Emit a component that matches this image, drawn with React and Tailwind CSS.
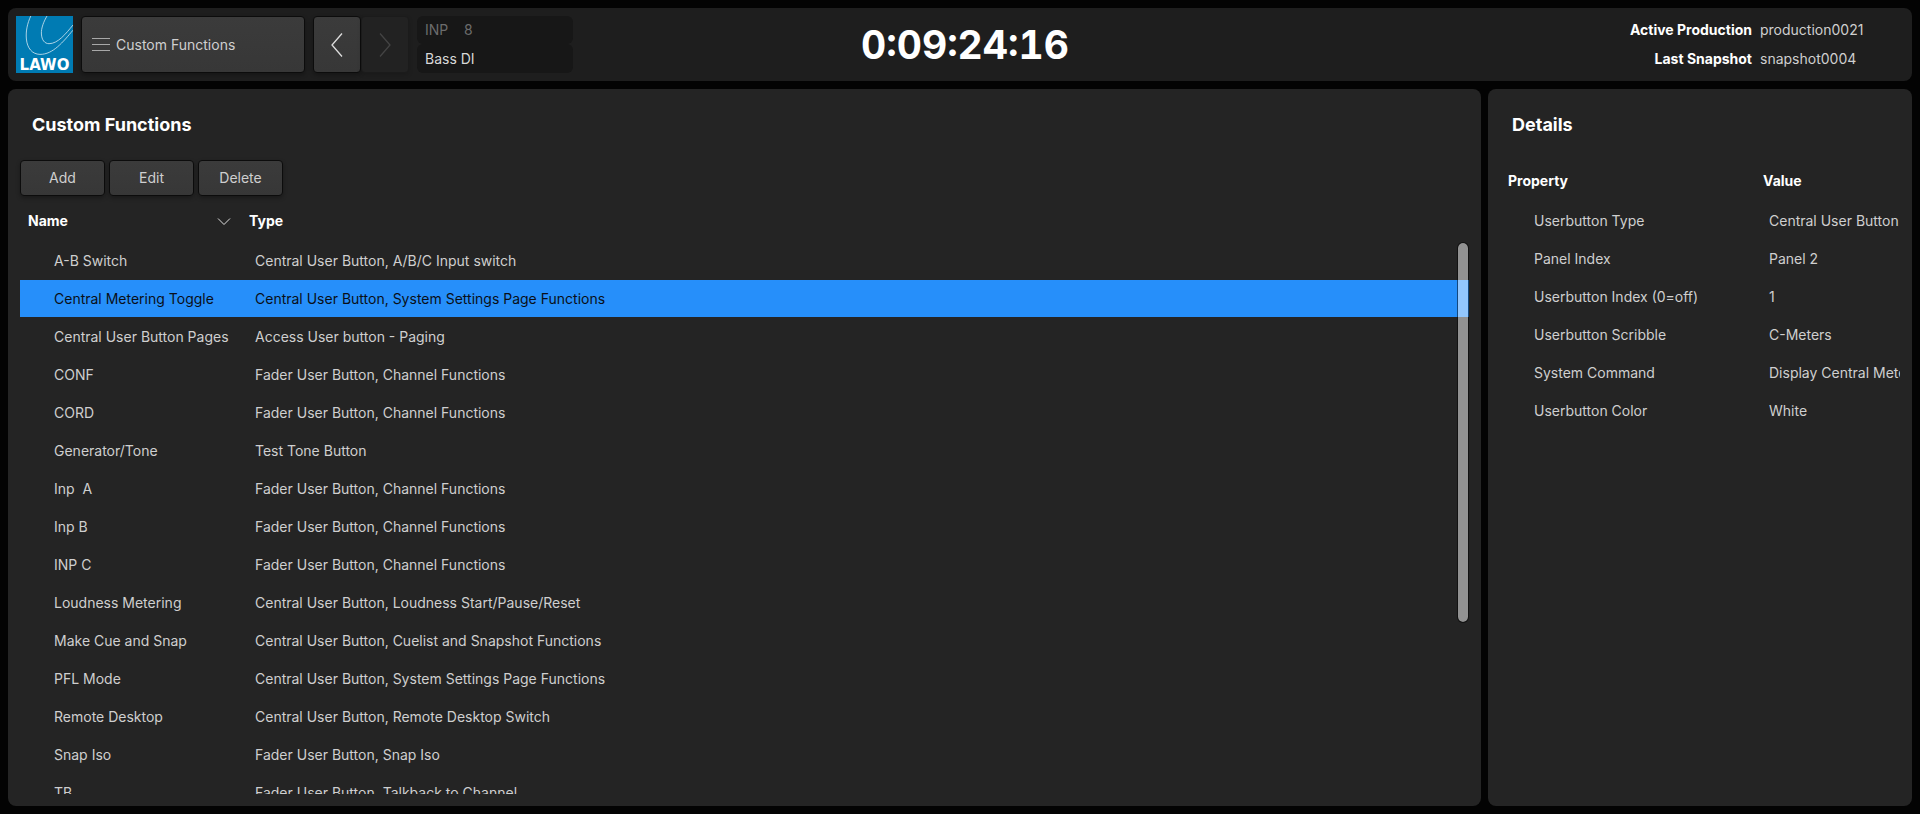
import React from "react";

const functions = [
  ["A-B Switch", "Central User Button, A/B/C Input switch"],
  ["Central Metering Toggle", "Central User Button, System Settings Page Functions"],
  ["Central User Button Pages", "Access User button - Paging"],
  ["CONF", "Fader User Button, Channel Functions"],
  ["CORD", "Fader User Button, Channel Functions"],
  ["Generator/Tone", "Test Tone Button"],
  ["Inp  A", "Fader User Button, Channel Functions"],
  ["Inp B", "Fader User Button, Channel Functions"],
  ["INP C", "Fader User Button, Channel Functions"],
  ["Loudness Metering", "Central User Button, Loudness Start/Pause/Reset"],
  ["Make Cue and Snap", "Central User Button, Cuelist and Snapshot Functions"],
  ["PFL Mode", "Central User Button, System Settings Page Functions"],
  ["Remote Desktop", "Central User Button, Remote Desktop Switch"],
  ["Snap Iso", "Fader User Button, Snap Iso"],
  ["TB", "Fader User Button, Talkback to Channel"],
];

const details = [
  ["Userbutton Type", "Central User Button"],
  ["Panel Index", "Panel 2"],
  ["Userbutton Index (0=off)", "1"],
  ["Userbutton Scribble", "C-Meters"],
  ["System Command", "Display Central Metering"],
  ["Userbutton Color", "White"],
];

const raised =
  "rounded border border-[#0c0c0c] bg-linear-to-b from-[#3b3b3b] to-[#373737] text-[#cfcfcf] shadow-[0_2px_4px_rgba(0,0,0,0.3)]";

function Logo() {
  return (
    <svg viewBox="0 0 57 57" className="size-[57px] shrink-0" role="img" aria-label="Lawo">
      <rect width="57" height="57" fill="#007bb3" />
      <g fill="none" stroke="#d5e9f3" strokeWidth="0.8">
        <path d="M14.8 0C11.5 7 9.600 15 10.400 23C11.200 32 16 38.200 24 38.400C37 38.500 47 26 57 14.200" />
        <path d="M31 0C28 5 25 12 25.400 18C25.800 24 28.500 27.600 33 27.700C42 27.700 50 17.500 57 9" />
      </g>
      <text
        x="28.500"
        y="53.500"
        textAnchor="middle"
        fontFamily="DejaVu Sans, sans-serif"
        fontWeight="700"
        fontSize="15"
        fill="#fff"
      >
        LAWO
      </text>
    </svg>
  );
}

function Chevron({ d, className, box }) {
  return (
    <svg viewBox={box} className={className} fill="none" stroke="currentColor" aria-hidden="true">
      <path d={d} />
    </svg>
  );
}

function Header() {
  return (
    <header className="grid grid-cols-[1fr_auto_1fr] items-center rounded-lg bg-[#1e1e1e] p-2">
      <div className="flex items-center">
        <Logo />
        <button className={`ml-2 flex h-[57px] w-56 items-center gap-1.5 px-2.5 ${raised}`}>
          <svg viewBox="0 0 18 13" className="h-[13px] w-[18px]" stroke="#a8a8a8" aria-hidden="true">
            <path d="M0 0.500H18M0 6.500H18M0 12.500H18" />
          </svg>
          Custom Functions
        </button>
        <button aria-label="Back" className={`ml-2 flex h-[57px] w-12 items-center justify-center ${raised}`}>
          <Chevron box="0 0 12 24" d="M11 0.500L1 12L11 23.500" className="h-6 w-3 stroke-[1.300] text-[#dedede]" />
        </button>
        <button
          aria-label="Forward"
          disabled
          className="flex h-[57px] w-12 items-center justify-center rounded border border-[#1b1b1b] bg-[#222222] shadow-[0_2px_4px_rgba(0,0,0,0.15)]"
        >
          <Chevron box="0 0 12 24" d="M1 0.500L11 12L1 23.500" className="h-6 w-3 stroke-[1.300] text-[#444444]" />
        </button>
        <div className="ml-2 w-[156px] whitespace-pre">
          <div className="flex h-7 items-center rounded-md bg-[#171717] px-2 text-[#6c6c6c]">{"INP    8"}</div>
          <div className="flex h-[29px] items-center rounded-md bg-[#171717] px-2 text-[#d8d8d8]">Bass DI</div>
        </div>
      </div>
      <time className="pl-2.5 text-[39px] leading-none font-bold text-white tabular-nums">0:09:24:16</time>
      <dl className="grid grid-cols-[1fr_144px] gap-x-2 gap-y-px leading-7">
        <dt className="text-right font-bold text-white">Active Production</dt>
        <dd>production0021</dd>
        <dt className="text-right font-bold text-white">Last Snapshot</dt>
        <dd>snapshot0004</dd>
      </dl>
    </header>
  );
}

function FunctionTable() {
  return (
    <div className="relative min-h-0 flex-1 overflow-hidden">
      <table className="w-full table-fixed border-separate border-spacing-0 text-left whitespace-pre">
        <thead>
          <tr className="h-[42px] text-white">
            <th className="w-[221px] pr-1.5 pl-2">
              <div className="flex items-center justify-between">
                Name
                <Chevron box="0 0 14 7" d="M1 0.500L7 6.500L13 0.500" className="mr-1 h-[7px] w-3.5 text-[#dedede]" />
              </div>
            </th>
            <th className="pl-2">Type</th>
          </tr>
        </thead>
        <tbody>
          {functions.map(([name, type], i) => (
            <tr key={i} aria-selected={i === 1} className={i === 1 ? "bg-[#268ffa] text-[#0a0f18]" : ""}>
              <td className="h-[38px] border-b border-[#242424] pl-[34px]">{name}</td>
              <td className="h-[38px] border-b border-[#242424] pl-3.5">{type}</td>
            </tr>
          ))}
        </tbody>
      </table>
      <div className="absolute top-[42px] right-0 h-[381px] w-3 rounded-full border border-black/50 bg-white/50 bg-clip-padding" />
    </div>
  );
}

export default function App() {
  return (
    <div className="flex h-screen flex-col gap-2 bg-[#030303] p-2 font-['Inter',sans-serif] text-sm text-[#cfcfcf]">
      <Header />
      <main className="flex min-h-0 flex-1 gap-[7px]">
        <section className="flex min-w-0 flex-1 flex-col rounded-lg bg-[#242424] p-3">
          <h1 className="px-3 pt-3 text-lg leading-6 font-bold text-white">Custom Functions</h1>
          <div className="mt-[23px] mb-1 flex gap-1">
            {["Add", "Edit", "Delete"].map((label) => (
              <button key={label} className={`h-9 w-[85px] ${raised}`}>
                {label}
              </button>
            ))}
          </div>
          <FunctionTable />
        </section>
        <section className="w-[424px] shrink-0 overflow-hidden rounded-lg bg-[#242424] p-3">
          <h2 className="px-3 pt-3 text-lg leading-6 font-bold text-white">Details</h2>
          <table className="mt-[23px] w-full table-fixed border-separate border-spacing-0 text-left whitespace-nowrap">
            <thead>
              <tr className="h-[42px] text-white">
                <th className="w-[255px] pl-2">Property</th>
                <th className="pl-2">Value</th>
              </tr>
            </thead>
            <tbody>
              {details.map(([property, value]) => (
                <tr key={property}>
                  <td className="h-[38px] pl-[34px]">{property}</td>
                  <td className="h-[38px] overflow-hidden pl-3.5">{value}</td>
                </tr>
              ))}
            </tbody>
          </table>
        </section>
      </main>
    </div>
  );
}
